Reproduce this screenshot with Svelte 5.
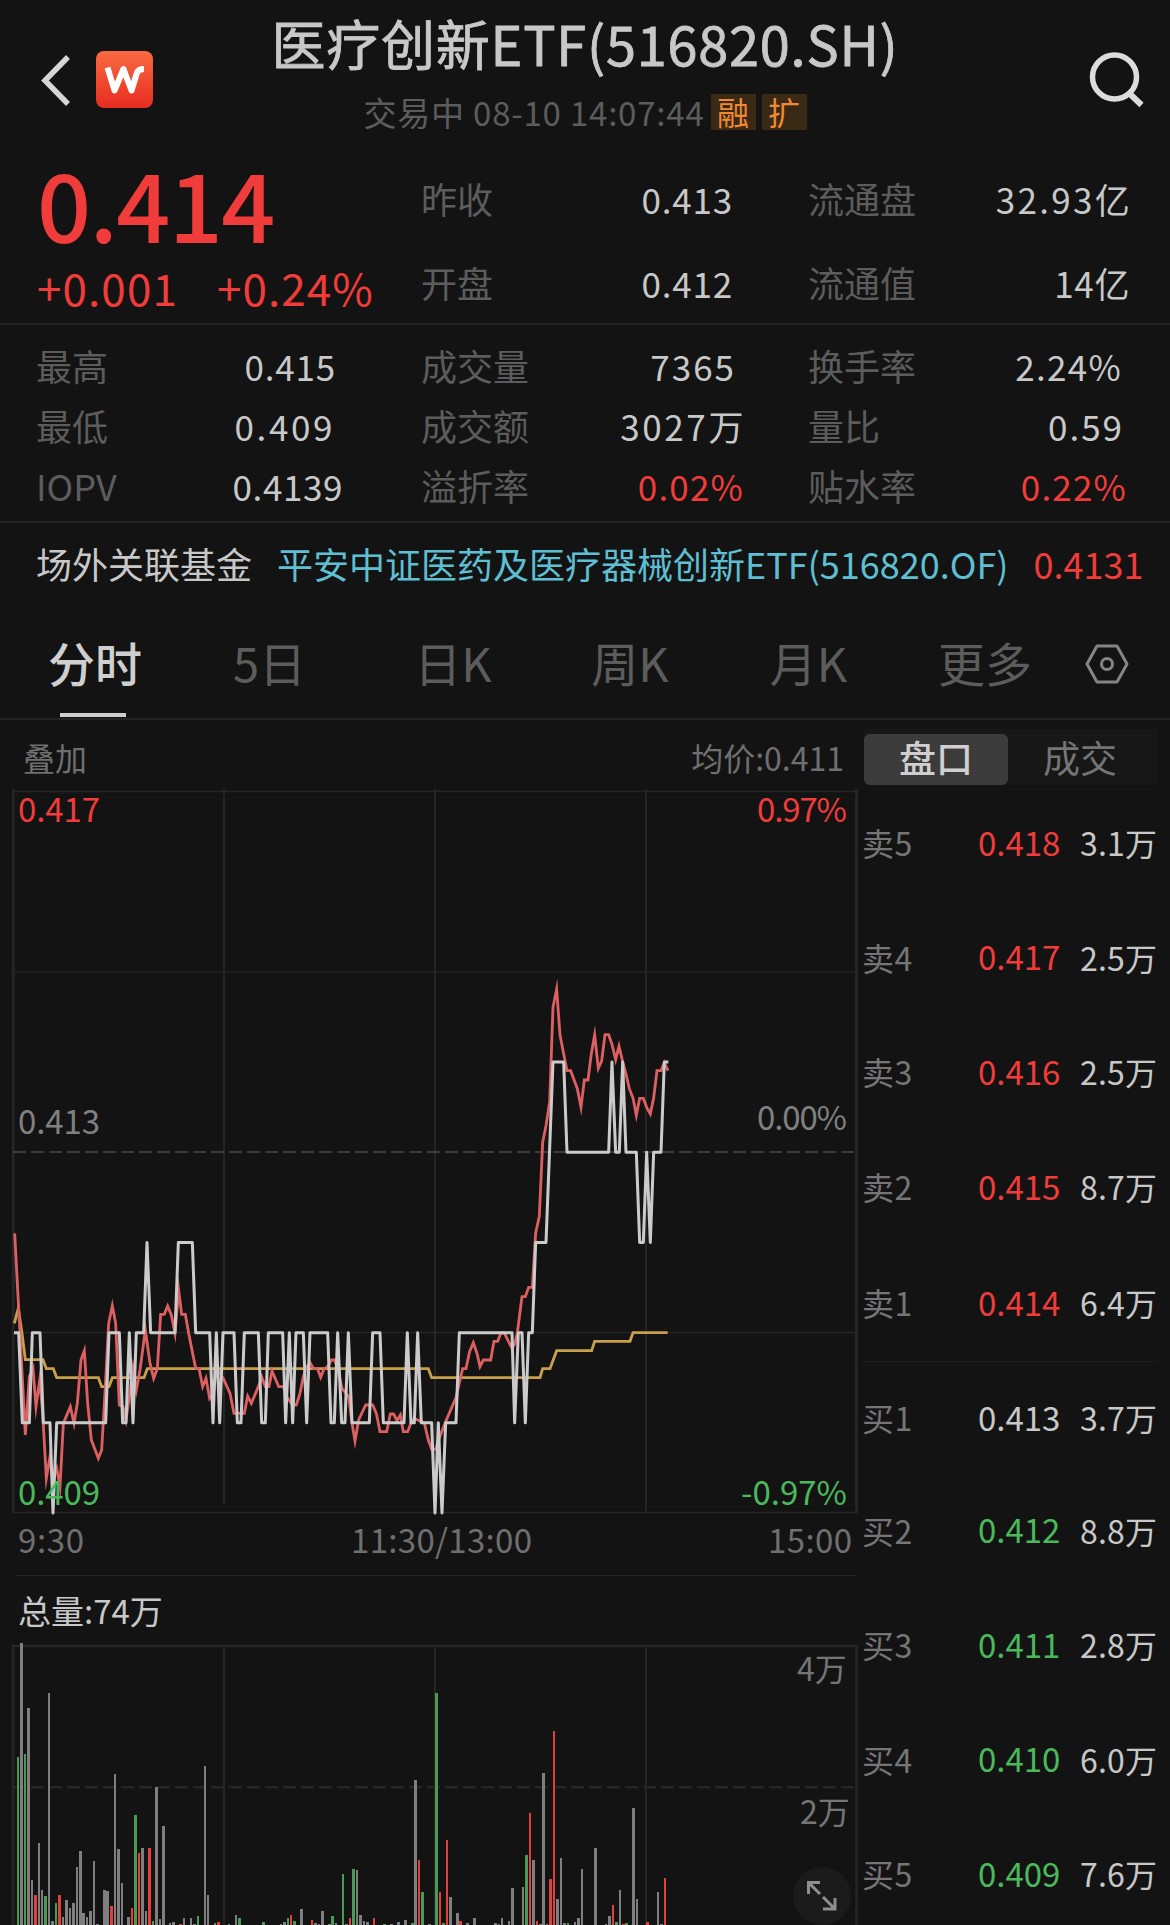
<script>
  const top = [
    { label: '昨收', value: '0.413', gap: 76, ls: 0.8 },
    { label: '流通盘', value: '32.93亿', gap: 38, ls: 2.3 },
    { label: '开盘', value: '0.412', gap: 76, ls: 0.8 },
    { label: '流通值', value: '14亿', gap: 40, ls: 0.6 }
  ];

  const stats = [
    { label: '最高', value: '0.415', gap: 86, ls: 0.8 },
    { label: '成交量', value: '7365', gap: 73, ls: 2 },
    { label: '换手率', value: '2.24%', gap: 48, ls: 1.3 },
    { label: '最低', value: '0.409', gap: 87, ls: 2.6 },
    { label: '成交额', value: '3027万', gap: 63, ls: 2.6 },
    { label: '量比', value: '0.59', gap: 46, ls: 2 },
    { label: 'IOPV', value: '0.4139', gap: 79, ls: 0.6 },
    { label: '溢折率', value: '0.02%', gap: 65, ls: 1.2, up: true },
    { label: '贴水率', value: '0.22%', gap: 43, ls: 1.2, up: true }
  ];

  const tabs = ['分时', '5日', '日K', '周K', '月K', '更多'];

  const book = [
    ['卖5', '0.418', '3.1万', 'up'],
    ['卖4', '0.417', '2.5万', 'up'],
    ['卖3', '0.416', '2.5万', 'up'],
    ['卖2', '0.415', '8.7万', 'up'],
    ['卖1', '0.414', '6.4万', 'up'],
    ['买1', '0.413', '3.7万', ''],
    ['买2', '0.412', '8.8万', 'down'],
    ['买3', '0.411', '2.8万', 'down'],
    ['买4', '0.410', '6.0万', 'down'],
    ['买5', '0.409', '7.6万', 'down']
  ];

  // price line: x and price in thousandths
  const price = [
    [42, 411], [56, 411], [67, 410], [88, 410], [97, 411], [120, 411], [130, 410], [150, 410], [159, 409], [170, 410],
    [317, 410], [327, 411], [358, 411], [368, 410], [378, 410], [388, 411], [399, 410], [409, 411], [431, 411], [441, 412],
    [452, 411], [525, 411], [535, 412], [577, 412], [587, 411], [629, 411], [639, 410], [649, 411], [659, 410], [669, 411],
    [702, 411], [712, 410], [723, 410], [733, 411], [775, 411], [785, 410], [796, 410], [805, 411],
    [848, 411], [857, 410], [868, 411], [878, 410], [888, 411], [910, 411], [920, 410], [930, 411], [983, 411], [993, 410],
    [1003, 410], [1013, 411], [1025, 410], [1035, 410], [1045, 411], [1056, 410], [1108, 410], [1118, 411], [1140, 411],
    [1150, 410], [1212, 410], [1222, 411], [1233, 410], [1243, 410], [1253, 411], [1264, 410], [1295, 410], [1305, 409],
    [1315, 410], [1326, 409], [1337, 410], [1368, 410], [1378, 411], [1536, 411], [1544, 410], [1555, 411], [1566, 411],
    [1576, 410], [1586, 411], [1597, 411], [1607, 412], [1638, 412], [1659, 414], [1691, 414], [1701, 413], [1826, 413],
    [1836, 414], [1847, 413], [1858, 413], [1868, 414], [1878, 413], [1909, 413], [1919, 412], [1930, 412], [1940, 413],
    [1951, 412], [1961, 413], [1983, 413], [1993, 414], [2005, 414]
  ];

  const pricePoints = price.map(([x, p]) => `${x},${458 - (p - 411) * 270.6}`).join(' ');

  const indexPoints =
    '44,160 60,460 76,765 88,590 99,565 108,680 119,600 128,700 139,895 150,830 158,900 170,865 180,920 190,730 211,680 222,730 ' +
    '232,670 243,540 253,512 263,670 274,780 295,835 305,810 316,620 326,430 337,377 347,430 358,675 369,680 378,720 388,650 ' +
    '399,565 409,630 420,570 436,450 450,550 461,595 472,565 482,403 493,403 503,378 514,405 525,460 536,330 545,403 556,403 ' +
    '566,460 577,515 587,565 597,565 608,620 618,595 629,655 640,640 650,565 670,595 690,640 702,700 733,700 743,648 754,670 ' +
    '775,620 785,590 796,620 807,620 816,573 836,620 850,620 860,650 878,675 889,675 900,640 910,590 920,560 930,548 940,565 ' +
    '952,565 962,592 972,567 983,560 994,540 1004,540 1014,570 1026,625 1046,650 1056,729 1065,783 1076,720 1097,675 1118,675 ' +
    '1129,700 1140,755 1160,755 1171,702 1181,702 1191,722 1201,705 1210,755 1223,755 1233,729 1243,715 1253,720 1273,729 ' +
    '1285,780 1295,808 1307,808 1316,780 1336,727 1368,653 1388,566 1398,566 1409,514 1420,488 1431,520 1440,560 1450,540 ' +
    '1472,540 1482,484 1493,484 1503,459 1513,459 1536,505 1544,492 1552,459 1566,350 1576,350 1586,322 1597,322 1607,159 ' +
    '1618,109 1628,-113 1638,-163 1649,-235 1659,-518 1670,-573 1680,-435 1701,-328 1712,-328 1732,-274 1743,-218 1753,-300 ' +
    '1764,-300 1774,-379 1784,-435 1795,-335 1805,-357 1815,-436 1826,-436 1836,-407 1847,-361 1857,-402 1868,-355 1878,-318 ' +
    '1888,-274 1899,-246 1909,-194 1919,-245 1930,-245 1940,-218 1951,-198 1961,-246 1971,-328 1983,-328 1993,-352 2004,-328';

  const avgPoints =
    '43,430 55,385 66,460 76,539 129,539 139,566 160,566 170,593 295,593 305,620 327,620 337,593 432,593 442,566 1285,566 ' +
    '1295,593 1620,593 1628,566 1650,566 1670,512 1775,512 1784,484 1890,484 1899,458 2003,458';

  // volume bars: x:height, suffix r = up, g = down
  const volume = (
    '54:504g 64:846 75:513g 85:651 96:135 106:90r 117:246 126:105 136:87g 147:696 157:12 168:66g 178:90r 189:24 199:75 210:51 ' +
    '220:66 231:174 241:222 250:36 261:24 271:42 282:192 292:3 313:105 323:102 334:57r 345:453 355:228 366:126 385:24 396:51r ' +
    '406:330g 417:216r 427:231 438:42 448:231r 459:12g 469:414 480:18 490:297 510:6 520:9 541:3r 552:21 573:21 583:3 594:27g ' +
    '615:477 624:90 645:6g 655:9r 687:3 708:30 718:21g 790:9g 843:3 853:9 864:21g 873:30r 883:12g 904:48 936:15r 947:6 957:3 ' +
    '967:42 988:3 998:27g 1008:6 1029:153g 1040:3 1050:21r 1060:168g 1071:165 1081:30 1092:12 1102:9 1122:21r 1153:3g 1174:3 ' +
    '1195:9 1216:15 1237:6g 1246:435 1257:195r 1267:99g 1288:3 1309:696g 1320:99r 1330:6g 1341:255r 1351:84 1372:36 1381:12r ' +
    '1402:6 1423:21 1486:6 1497:3 1506:21 1527:12 1537:111 1569:114 1579:210g 1590:336r 1600:195 1611:12r 1621:3 1630:456 ' +
    '1641:3 1651:138r 1662:582r 1672:78 1683:201 1694:6 1704:6g 1725:9 1735:21 1746:168 1786:231 1818:3 1828:27 1839:60r ' +
    '1849:9g 1860:105 1870:3r 1879:6g 1900:351 1911:78 1942:9r 1974:99 1984:3 1995:141r'
  ).split(' ').map((s) => {
    const [x, h] = s.split(':');
    const color = h.endsWith('r') ? '#e0413d' : h.endsWith('g') ? '#479b54' : '#7f7f7f';
    return { x: +x, h: parseInt(h), color };
  });
</script>

<main>
  <header>
    <svg class="back" width="34" height="58" viewBox="0 0 34 58">
      <path d="M29 5 L6 28.5 L29 52" fill="none" stroke="#d6d6d6" stroke-width="5.5" />
    </svg>
    <svg class="logo" width="57" height="57" viewBox="0 0 57 57">
      <defs>
        <linearGradient id="logo" x1="0" y1="0" x2="0" y2="1">
          <stop offset="0" stop-color="#fb6a42" />
          <stop offset="1" stop-color="#e62c20" />
        </linearGradient>
      </defs>
      <rect width="57" height="57" rx="8" fill="url(#logo)" />
      <path d="M11.5 16.5 L18.5 39.5 L27.5 18 L35.5 39.5 L41 21.5 Q42.5 18 48 18" fill="none" stroke="#fff" stroke-width="6" stroke-linejoin="round" />
    </svg>
    <div class="heading">
      <h1>医疗创新ETF(516820.SH)</h1>
      <div class="sub">
        <span class="time">交易中 08-10 14:07:44</span>
        <span class="badge">融</span>
        <span class="badge">扩</span>
      </div>
    </div>
    <svg class="search" width="58" height="58" viewBox="0 0 58 58">
      <circle cx="25.5" cy="27" r="22" fill="none" stroke="#dcdcdc" stroke-width="5.5" />
      <path d="M40 43 L52.5 55" stroke="#dcdcdc" stroke-width="6" />
    </svg>
  </header>

  <section class="quote">
    <div class="now up">
      <div class="last">0.414</div>
      <div class="change"><span>+0.001</span><span>+0.24%</span></div>
    </div>
    <div class="pairs">
      {#each top as item}
        <div class="cell">
          <span class="label">{item.label}</span>
          <span class="value" style="margin-right: {item.gap}px; letter-spacing: {item.ls}px">{item.value}</span>
        </div>
      {/each}
    </div>
  </section>

  <section class="stats">
    {#each stats as item}
      <div class="cell">
        <span class="label">{item.label}</span>
        <span class="value" class:up={item.up} style="margin-right: {item.gap}px; letter-spacing: {item.ls}px">{item.value}</span>
      </div>
    {/each}
  </section>

  <section class="fund">
    <span>场外关联基金</span>
    <span class="link">平安中证医药及医疗器械创新ETF(516820.OF)</span>
    <span class="up">0.4131</span>
  </section>

  <nav>
    {#each tabs as tab, i}
      <span class="tab" class:active={i === 0}>{tab}</span>
    {/each}
    <svg class="gear" width="44" height="42" viewBox="0 0 44 42">
      <path d="M12 3 H32 L42 21 L32 39 H12 L2 21 Z" fill="none" stroke="#858585" stroke-width="3" stroke-linejoin="round" />
      <circle cx="22" cy="21" r="5.5" fill="none" stroke="#858585" stroke-width="3" />
    </svg>
  </nav>

  <div class="body">
    <div class="charts">
      <div class="chart-head">
        <span>叠加</span>
        <span class="avg">均价:0.411</span>
      </div>

      <svg class="chart" width="860" height="788" viewBox="0 788 860 788">
        <g stroke="#252525" stroke-width="2">
          <path d="M12 791.5 H858 M12 972 H857 M12 1332.5 H857 M12 1512.5 H858" stroke-width="1.6" />
          <path d="M13.3 789 V1513 M856.5 789 V1513" stroke-width="3" />
          <path d="M224 789 V1504 M435 789 V1513 M646 789 V1513" />
          <path d="M13 1152 H857" stroke="#4a4a4a" stroke-dasharray="13 5" stroke-width="1.6" />
          <path d="M16 1575.5 H857" stroke-width="1" />
        </g>
        <g transform="translate(0 1180) scale(0.33333)" fill="none" stroke-miterlimit="12">
          <polyline points={avgPoints} stroke="#c8a04c" stroke-width="8.5" />
          <polyline points={indexPoints} stroke="#dc6062" stroke-width="8.5" />
          <polyline points={pricePoints} stroke="#cbcbcb" stroke-width="9" stroke-linejoin="round" />
        </g>
        <g font-size="33">
          <text x="18" y="822" fill="#f03c3a" textLength="82">0.417</text>
          <text x="757" y="822" fill="#f03c3a" textLength="90">0.97%</text>
          <text x="18" y="1134" fill="#808080" textLength="82">0.413</text>
          <text x="757" y="1130" fill="#808080" textLength="90">0.00%</text>
          <text x="18" y="1505" fill="#4cb85c" textLength="82">0.409</text>
          <text x="741" y="1505" fill="#4cb85c" textLength="106">-0.97%</text>
        </g>
        <g font-size="33" fill="#6f6f6f">
          <text x="18" y="1553" textLength="66">9:30</text>
          <text x="351" y="1553" textLength="181">11:30/13:00</text>
          <text x="768" y="1553" textLength="84">15:00</text>
        </g>
      </svg>

      <div class="total">总量:74万</div>

      <svg class="chart" width="860" height="282" viewBox="0 1643 860 282">
        <g fill="none" stroke="#252525" stroke-width="2">
          <path d="M13 1925 V1646 H856.5 V1925" stroke-width="2.6" />
          <path d="M224 1648 V1925 M435 1648 V1925 M646 1648 V1925" />
          <path d="M13 1787.3 H857" stroke-dasharray="13 5" stroke-width="2.6" />
        </g>
        <g shape-rendering="crispEdges">
          {#each volume as bar}
            <rect x={bar.x / 3 - 1.25} y={1925 - bar.h / 3} width="2.5" height={bar.h / 3} fill={bar.color} />
          {/each}
        </g>
        <g font-size="32" fill="#757575">
          <text x="797" y="1681">4万</text>
          <text x="800" y="1824">2万</text>
        </g>
        <circle cx="822" cy="1896" r="29" fill="#1b1b1b" />
        <path d="M808.5 1894 V1882.5 H820 M809 1883 L820 1894 M835 1898 V1909 H823 M823 1897 L835 1909" fill="none" stroke="#8e8e8e" stroke-width="3" />
      </svg>
    </div>

    <aside>
      <div class="switch">
        <span class="on">盘口</span>
        <span>成交</span>
      </div>
      <div class="book">
        {#each book as [name, p, vol, dir], i}
          <div class="level" class:last-sell={i === 4} class:first-buy={i === 5}>
            <span class="name">{name}</span>
            <span class="price {dir}">{p}</span>
            <span class="vol">{vol}</span>
          </div>
        {/each}
      </div>
    </aside>
  </div>
</main>

<style>
  :global(body) {
    background: #131313;
  }

  main {
    width: 1170px;
    height: 1925px;
    overflow: hidden;
    background: #131313;
    color: #c8c8c8;
    font-family: 'Noto Sans CJK SC', sans-serif;
    font-size: 35px;
    line-height: 1;
    white-space: nowrap;
  }

  .up {
    color: #f03c3a;
  }

  .down {
    color: #4cb85c;
  }

  header {
    display: flex;
    height: 156px;
    box-sizing: border-box;
    padding-left: 39px;
  }

  .back {
    margin-top: 52px;
  }

  .logo {
    margin: 51px 0 0 23px;
  }

  .heading {
    width: 864px;
    display: flex;
    flex-direction: column;
    align-items: center;
  }

  h1 {
    margin: 14px 0 0;
    font-size: 54px;
    font-weight: 400;
    line-height: 58px;
    letter-spacing: 0.8px;
    -webkit-text-stroke: 0.8px;
  }

  .sub {
    display: flex;
    align-items: center;
    margin-top: 22px;
    gap: 6px;
    height: 36px;
    font-size: 33px;
    color: #5c5c5c;
  }

  .time {
    letter-spacing: 0.8px;
  }

  .badge {
    width: 45px;
    height: 36px;
    line-height: 34px;
    text-align: center;
    font-size: 32px;
    color: #f08a34;
    background: #3a2915;
  }

  .search {
    margin: 50px 0 0 72px;
  }

  .quote {
    display: flex;
    height: 167px;
    border-bottom: 2px solid #232323;
  }

  .now {
    flex: none;
    width: 422px;
    box-sizing: border-box;
    padding-left: 37px;
  }

  .last {
    margin-top: -2px;
    height: 95px;
    line-height: 95px;
    font-size: 95px;
    font-weight: 500;
    letter-spacing: -1.6px;
  }

  .change {
    display: flex;
    gap: 39px;
    font-size: 44px;
    line-height: 76px;
    letter-spacing: 1.1px;
  }

  .pairs {
    display: grid;
    grid-template-columns: 387px 361px;
    grid-auto-rows: 84px;
  }

  .cell {
    display: flex;
    align-items: center;
    justify-content: space-between;
  }

  .label {
    margin-left: -1px;
    font-size: 36px;
    color: #5c5c5c;
  }

  .stats {
    display: grid;
    grid-template-columns: 385px 387px 361px;
    grid-auto-rows: 60px;
    padding: 10px 0 6px 37px;
    border-bottom: 2px solid #232323;
  }

  .fund {
    display: flex;
    align-items: center;
    height: 79px;
    padding: 0 0 1px 36px;
    font-size: 36px;
    gap: 25px;
  }

  .link {
    color: #5fbfd2;
  }

  nav {
    display: grid;
    grid-template-columns: 190px 159px 208px 146px 211px 142px 1fr;
    align-items: center;
    height: 115px;
    font-size: 47px;
    color: #5c5c5c;
    border-bottom: 2px solid #232323;
  }

  .tab {
    height: 115px;
    line-height: 117px;
    text-align: center;
  }

  .tab.active {
    position: relative;
    color: #cfcfcf;
    font-weight: 500;
  }

  .tab.active::after {
    content: '';
    position: absolute;
    left: 60px;
    bottom: 1px;
    width: 66px;
    height: 4px;
    background: #cfcfcf;
  }

  .gear {
    margin: 6px 0 0 29px;
  }

  .body {
    display: flex;
  }

  .charts {
    width: 860px;
  }

  .chart-head {
    display: flex;
    justify-content: space-between;
    height: 68px;
    line-height: 74px;
    padding: 0 16px 0 23px;
    font-size: 32px;
    color: #6f6f6f;
  }

  .chart {
    display: block;
  }

  .total {
    height: 67px;
    line-height: 69px;
    padding-left: 18px;
    font-size: 33px;
  }

  aside {
    width: 310px;
  }

  .switch {
    display: flex;
    margin: 9px 12px 0 4px;
    height: 56px;
    padding-top: 5px;
    box-sizing: border-box;
    background: #171717;
    font-size: 37px;
    color: #757575;
  }

  .switch span {
    width: 144px;
    height: 51px;
    line-height: 47px;
    text-align: center;
    border-radius: 6px;
  }

  .switch .on {
    color: #cfcfcf;
    font-weight: 500;
    background: #3b3b3b;
  }

  .level {
    display: grid;
    grid-template-columns: 116px 102px 1fr;
    align-items: center;
    height: 114.6px;
    margin: 0 12px 0 2px;
    font-size: 33px;
    box-sizing: border-box;
  }

  .level.last-sell {
    height: 119px;
    border-bottom: 1px solid #1d1d1d;
  }

  .level.first-buy {
    height: 110px;
  }

  .name {
    color: #757575;
    font-size: 32px;
    letter-spacing: 0.5px;
  }

  .vol {
    font-size: 32px;
    letter-spacing: 0.2px;
  }
</style>
